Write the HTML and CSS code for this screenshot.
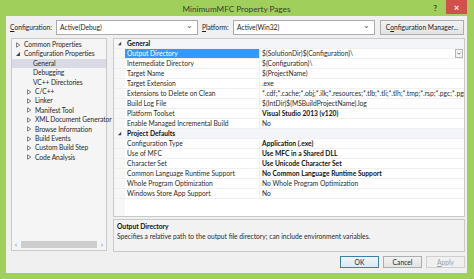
FILE: index.html
```html
<!DOCTYPE html>
<html>
<head>
<meta charset="utf-8">
<link rel="stylesheet" href="styles.css">
</head>
<body>
<div class="window">
  <div class="titlebar">
    <div class="title">MinimumMFC Property Pages</div>
    <div class="help">?</div>
    <div class="close">×</div>
  </div>
  <div class="client">
    <div class="toolbar">
      <span class="label lbl-config"><u>C</u>onfiguration:</span>
      <div class="combo combo-config"><span>Active(Debug)</span><span class="chev">⌄</span></div>
      <span class="label lbl-platform"><u>P</u>latform:</span>
      <div class="combo combo-platform"><span>Active(Win32)</span><span class="chev">⌄</span></div>
      <div class="btn btn-cm">C<u>o</u>nfiguration Manager...</div>
    </div>
    <div class="main">
      <div class="tree">
        <div class="tree-list">
          <div class="node l1"><svg class="tri" viewBox="0 0 6 6"><path d="M1.5 0.8 L4.8 3 L1.5 5.2 Z" fill="none" stroke="#666" stroke-width="0.8"/></svg>Common Properties</div>
          <div class="node l1"><svg class="tri" viewBox="0 0 6 6"><path d="M5 1 L5 5 L1 5 Z" fill="#444"/></svg>Configuration Properties</div>
          <div class="node l2 sel">General</div>
          <div class="node l2">Debugging</div>
          <div class="node l2">VC++ Directories</div>
          <div class="node l2e"><svg class="tri" viewBox="0 0 6 6"><path d="M1.5 0.8 L4.8 3 L1.5 5.2 Z" fill="none" stroke="#666" stroke-width="0.8"/></svg>C/C++</div>
          <div class="node l2e"><svg class="tri" viewBox="0 0 6 6"><path d="M1.5 0.8 L4.8 3 L1.5 5.2 Z" fill="none" stroke="#666" stroke-width="0.8"/></svg>Linker</div>
          <div class="node l2e"><svg class="tri" viewBox="0 0 6 6"><path d="M1.5 0.8 L4.8 3 L1.5 5.2 Z" fill="none" stroke="#666" stroke-width="0.8"/></svg>Manifest Tool</div>
          <div class="node l2e"><svg class="tri" viewBox="0 0 6 6"><path d="M1.5 0.8 L4.8 3 L1.5 5.2 Z" fill="none" stroke="#666" stroke-width="0.8"/></svg>XML Document Generator</div>
          <div class="node l2e"><svg class="tri" viewBox="0 0 6 6"><path d="M1.5 0.8 L4.8 3 L1.5 5.2 Z" fill="none" stroke="#666" stroke-width="0.8"/></svg>Browse Information</div>
          <div class="node l2e"><svg class="tri" viewBox="0 0 6 6"><path d="M1.5 0.8 L4.8 3 L1.5 5.2 Z" fill="none" stroke="#666" stroke-width="0.8"/></svg>Build Events</div>
          <div class="node l2e"><svg class="tri" viewBox="0 0 6 6"><path d="M1.5 0.8 L4.8 3 L1.5 5.2 Z" fill="none" stroke="#666" stroke-width="0.8"/></svg>Custom Build Step</div>
          <div class="node l2e"><svg class="tri" viewBox="0 0 6 6"><path d="M1.5 0.8 L4.8 3 L1.5 5.2 Z" fill="none" stroke="#666" stroke-width="0.8"/></svg>Code Analysis</div>
        </div>
        <div class="hscroll">
          <span class="arr">‹</span>
          <div class="thumb"></div>
          <span class="arr">›</span>
        </div>
      </div>
      <div class="right">
        <div class="grid">
          <div class="row cat"><div class="gut"><svg class="tri2" viewBox="0 0 6 6"><path d="M5 1 L5 5 L1 5 Z" fill="#444"/></svg></div><div class="name">General</div><div class="val"></div></div>
          <div class="row active"><div class="gut"></div><div class="name">Output Directory</div><div class="val">$(SolutionDir)$(Configuration)\<span class="dd"><svg viewBox="0 0 8 8"><path d="M2 3 L4 5 L6 3" fill="none" stroke="#444" stroke-width="1"/></svg></span></div></div>
          <div class="row"><div class="gut"></div><div class="name">Intermediate Directory</div><div class="val">$(Configuration)\</div></div>
          <div class="row"><div class="gut"></div><div class="name">Target Name</div><div class="val">$(ProjectName)</div></div>
          <div class="row"><div class="gut"></div><div class="name">Target Extension</div><div class="val">.exe</div></div>
          <div class="row"><div class="gut"></div><div class="name">Extensions to Delete on Clean</div><div class="val">*.cdf;*.cache;*.obj;*.ilk;*.resources;*.tlb;*.tli;*.tlh;*.tmp;*.rsp;*.pgc;*.pgd;*.meta;*.tlog;*.manifest</div></div>
          <div class="row"><div class="gut"></div><div class="name">Build Log File</div><div class="val">$(IntDir)$(MSBuildProjectName).log</div></div>
          <div class="row"><div class="gut"></div><div class="name">Platform Toolset</div><div class="val b">Visual Studio 2013 (v120)</div></div>
          <div class="row"><div class="gut"></div><div class="name">Enable Managed Incremental Build</div><div class="val">No</div></div>
          <div class="row cat"><div class="gut"><svg class="tri2" viewBox="0 0 6 6"><path d="M5 1 L5 5 L1 5 Z" fill="#444"/></svg></div><div class="name">Project Defaults</div><div class="val"></div></div>
          <div class="row"><div class="gut"></div><div class="name">Configuration Type</div><div class="val b">Application (.exe)</div></div>
          <div class="row"><div class="gut"></div><div class="name">Use of MFC</div><div class="val b">Use MFC in a Shared DLL</div></div>
          <div class="row"><div class="gut"></div><div class="name">Character Set</div><div class="val b">Use Unicode Character Set</div></div>
          <div class="row"><div class="gut"></div><div class="name">Common Language Runtime Support</div><div class="val b">No Common Language Runtime Support</div></div>
          <div class="row"><div class="gut"></div><div class="name">Whole Program Optimization</div><div class="val">No Whole Program Optimization</div></div>
          <div class="row"><div class="gut"></div><div class="name">Windows Store App Support</div><div class="val">No</div></div>
          <div class="fill"><div class="gut"></div></div>
        </div>
        <div class="desc">
          <div class="desc-title">Output Directory</div>
          <div class="desc-text">Specifies a relative path to the output file directory; can include environment variables.</div>
        </div>
      </div>
    </div>
    <div class="buttons">
      <div class="btn btn-ok">OK</div>
      <div class="btn btn-cancel">Cancel</div>
      <div class="btn btn-apply disabled"><u>A</u>pply</div>
    </div>
  </div>
</div>
</body>
</html>
```

FILE: styles.css
```css
html, body {
  margin: 0;
  padding: 0;
  width: 474px;
  height: 279px;
  overflow: hidden;
  background: #9fcf5a;
}
* { box-sizing: border-box; }
.window {
  width: 474px;
  height: 279px;
  background: #a0d05b;
  display: flex;
  flex-direction: column;
  padding: 0 7px 6px 6px;
  font-family: "Lato", "Noto Sans", sans-serif;
  font-size: 6.7px;
  color: #1e1e1e;
}
.titlebar {
  height: 18px;
  position: relative;
  display: flex;
  align-items: center;
  justify-content: center;
}
.title {
  font-size: 8.2px;
  color: #3a3a3a;
  margin-top: 1px;
}
.help {
  position: absolute;
  right: 30px;
  top: 4px;
  font-size: 7.5px;
  font-weight: bold;
  color: #333;
}
.close {
  position: absolute;
  right: 0;
  top: 0;
  width: 21px;
  height: 14px;
  background: #d2504c;
  color: #fff;
  font-size: 9px;
  font-weight: bold;
  display: flex;
  align-items: center;
  justify-content: center;
}
.client {
  flex: 1;
  background: #f0f0f0;
  display: flex;
  flex-direction: column;
  padding: 3px 2px 5px 5px;
  min-width: 0;
}
.toolbar {
  height: 16px;
  display: flex;
  align-items: center;
}
.label { white-space: nowrap; }
.lbl-config { width: 46px; margin-left: -1px; }
.lbl-platform { width: 31px; margin-left: 4px; }
.combo {
  height: 15px;
  border: 1px solid #acacac;
  background: #fff;
  display: flex;
  align-items: center;
  justify-content: space-between;
  padding: 0 4px 0 3px;
}
.combo-config { width: 142px; }
.combo-platform { width: 142px; }
.chev { font-size: 8px; color: #555; line-height: 1; margin-top: -4px; }
.btn {
  height: 15px;
  border: 1px solid #adadad;
  background: linear-gradient(#f2f2f2, #e3e3e3);
  display: flex;
  align-items: center;
  justify-content: center;
  white-space: nowrap;
}
.btn-cm { width: 84px; margin-left: 5px; }
.main {
  flex: 1;
  display: flex;
  margin-top: 3px;
  min-height: 0;
  min-width: 0;
}
.tree {
  width: 96px;
  flex: none;
  margin-bottom: 1px;
  border: 1px solid #c9c9c9;
  background: #f5f5f5;
  display: flex;
  flex-direction: column;
  letter-spacing: -0.06px;
}
.tree-list {
  flex: 1;
  padding-top: 1px;
}
.node {
  height: 9.4px;
  line-height: 9.4px;
  white-space: nowrap;
  display: flex;
  align-items: center;
  color: #2a2a2a;
}
.node.l1 { padding-left: 3px; }
.node.l2 { padding-left: 21px; }
.node.l2e { padding-left: 14px; }
.node.sel { background: #dadae4; }
.tri { width: 6px; height: 6px; margin-right: 3px; flex: none; }
.hscroll {
  height: 8px;
  margin: 0 1px 2px;
  display: flex;
  align-items: center;
  gap: 2px;
  color: #555;
  font-size: 7px;
}
.arr { width: 6px; text-align: center; line-height: 8px; }
.thumb { flex: 1; height: 7px; background: #cdcdcd; }
.right {
  flex: 1;
  min-width: 0;
  display: flex;
  flex-direction: column;
  margin-left: 6px;
}
.grid {
  height: 179px;
  border: 1px solid #c9c9c9;
  background: #fff;
  display: flex;
  flex-direction: column;
  overflow: hidden;
  min-width: 0;
}
.row {
  height: 10px;
  display: flex;
  align-items: stretch;
  border-bottom: 1px solid #f0f0f0;
  flex: none;
  min-width: 0;
}
.gut {
  width: 11px;
  flex: none;
  background: #f7f7f7;
  display: flex;
  align-items: center;
  justify-content: center;
}
.tri2 { width: 5px; height: 5px; }
.name {
  width: 134px;
  flex: none;
  padding-left: 2px;
  white-space: nowrap;
  overflow: hidden;
  line-height: 9px;
  color: #2b2b2b;
}
.val {
  flex: 1;
  min-width: 0;
  padding-left: 2px;
  white-space: nowrap;
  overflow: hidden;
  line-height: 9px;
  border-left: 1px solid #f0f0f0;
  position: relative;
  color: #2b2b2b;
}
.val.b { font-weight: bold; color: #111; }
.cat .name { font-weight: bold; color: #111; }
.cat .name, .cat .val { background: #f4f5f8; }
.cat .val { border-left: none; }
.active .name { background: #3399ff; color: #fff; }
.dd {
  position: absolute;
  right: 1px;
  top: 0;
  width: 8px;
  height: 9px;
  border: 1px solid #b5b5b5;
  background: #f2f2f2;
  display: flex;
}
.dd svg { width: 6px; height: 7px; }
.fill { flex: 1; display: flex; }
.desc {
  height: 33px;
  margin-top: 2px;
  border: 1px solid #c9c9c9;
  background: #f2f2f2;
  padding: 2px 3px;
}
.desc-title { font-weight: bold; line-height: 9px; color: #111; }
.desc-text { line-height: 10px; color: #2b2b2b; }
.buttons {
  height: 12px;
  margin-top: 4px;
  display: flex;
  justify-content: flex-end;
  gap: 4px;
}
.buttons .btn { width: 39px; height: 12px; }
.btn-ok { border-color: #3c7fb1; background: linear-gradient(#eef5fb, #dfe9f4); }
.disabled { color: #a0a0a0; border-color: #cfcfcf; background: #f0f0f0; }
```
